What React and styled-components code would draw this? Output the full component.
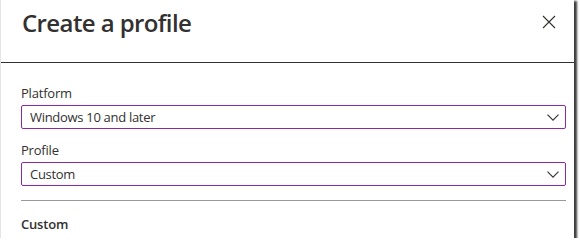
import React from "react";
import styled, { createGlobalStyle } from "styled-components";

const Global = createGlobalStyle`
  html, body { margin: 0; padding: 0; background: #ffffff; }
  body { font-family: "Open Sans", "Noto Sans", sans-serif; color: #323130; }
`;

const Panel = styled.div`
  width: 574px;
  height: 238px;
  background: #fff;
  border-left: 1px solid #e4e4e4;
  box-sizing: border-box;
  box-shadow: 2px 2px 2px 1px #3e3e3e;
  display: flex;
  flex-direction: column;
  overflow: hidden;
`;

const Header = styled.div`
  height: 62px;
  border-bottom: 1px solid #323130;
  display: flex;
  align-items: flex-start;
  justify-content: space-between;
  padding: 0 18px 0 21px;
  box-sizing: content-box;
`;

const Title = styled.h1`
  margin: 6px 0 0;
  font-family: "Open Sans", sans-serif;
  font-weight: 600;
  font-size: 24px;
  letter-spacing: -0.6px;
  color: #323130;
`;

const CloseButton = styled.button`
  border: none;
  background: none;
  padding: 0;
  margin-top: 15px;
  width: 14px;
  height: 14px;
  display: flex;
  cursor: pointer;
`;

const Body = styled.div`
  padding: 21px 8px 0 20px;
  display: flex;
  flex-direction: column;
`;

const Field = styled.div`
  display: flex;
  flex-direction: column;
  margin-bottom: ${(p) => p.$mb || 0}px;
`;

const Label = styled.label`
  font-size: 13px;
  line-height: 18px;
  margin-bottom: 3px;
  letter-spacing: -0.2px;
  color: #323130;
`;

const Select = styled.div`
  height: 22px;
  border: 1px solid #8a2aa6;
  border-radius: 2px;
  display: flex;
  align-items: center;
  justify-content: space-between;
  padding: 0 6px 0 8px;
  font-size: 13px;
  letter-spacing: -0.3px;
  color: #323130;
`;

const Divider = styled.hr`
  border: none;
  border-top: 1px solid #999;
  margin: 14px 0 0;
`;

const Section = styled.div`
  margin-top: 14px;
  font-size: 13px;
  font-weight: 600;
  letter-spacing: -0.2px;
  color: #323130;
`;

const Chevron = () => (
  <svg width="12" height="7" viewBox="0 0 12 7">
    <path d="M0.5 0.6 L6 6.1 L11.5 0.6" fill="none" stroke="#323130" strokeWidth="1.1" />
  </svg>
);

const CloseIcon = () => (
  <svg width="14" height="14" viewBox="0 0 14 14">
    <path d="M1 1 L13 13 M13 1 L1 13" stroke="#323130" strokeWidth="1.1" />
  </svg>
);

export default function App() {
  return (
    <>
      <Global />
      <Panel>
        <Header>
          <Title>Create a profile</Title>
          <CloseButton aria-label="Close">
            <CloseIcon />
          </CloseButton>
        </Header>
        <Body>
          <Field $mb={12}>
            <Label>Platform</Label>
            <Select>
              <span>Windows 10 and later</span>
              <Chevron />
            </Select>
          </Field>
          <Field>
            <Label>Profile</Label>
            <Select>
              <span>Custom</span>
              <Chevron />
            </Select>
          </Field>
          <Divider />
          <Section>Custom</Section>
        </Body>
      </Panel>
    </>
  );
}
